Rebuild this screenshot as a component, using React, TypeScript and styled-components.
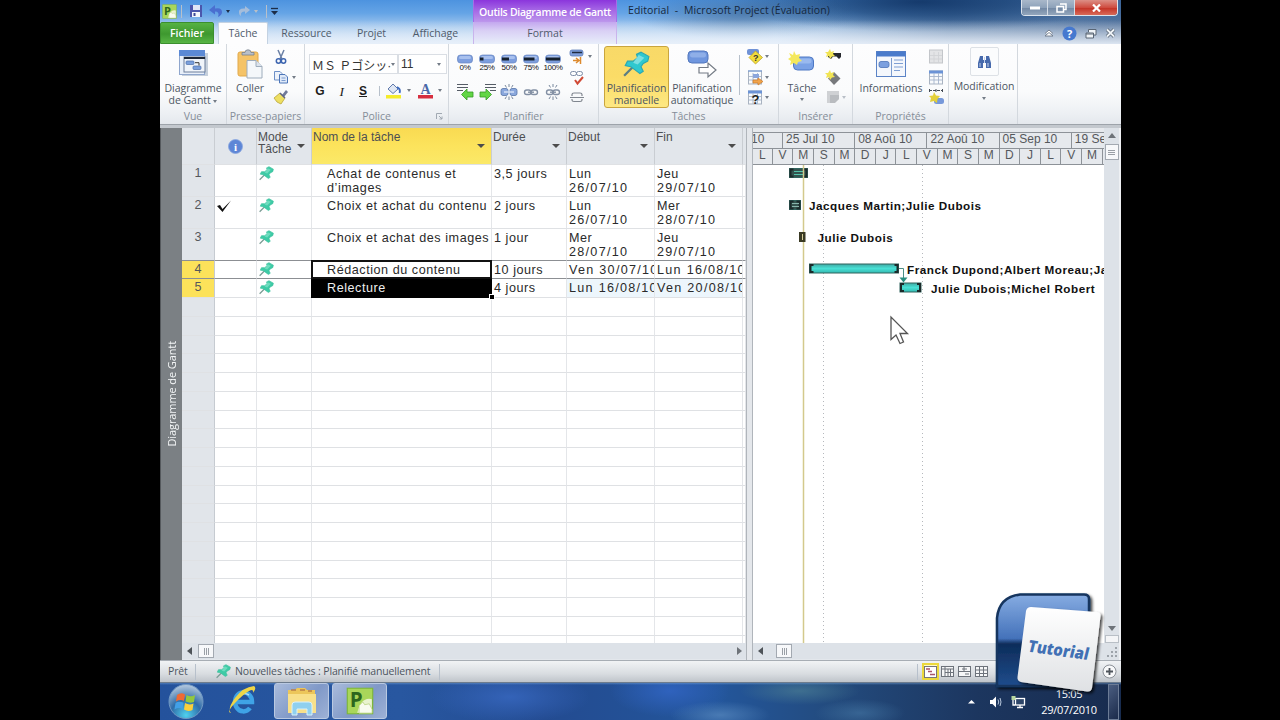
import React from 'react';
import styled, { createGlobalStyle } from 'styled-components';

const UI_FONT = '"Open Sans", "Noto Sans", sans-serif';
const SHEET_FONT = '"Liberation Sans", "Noto Sans CJK JP", sans-serif';
const COLUMNS = '33px 42px 55px 180px 75px 88px 88px 3px';

const GlobalStyle = createGlobalStyle`
  * { box-sizing: border-box; }
  body { margin: 0; background: #000; overflow: hidden; }
  svg { display: block; flex: none; }
`;

const Screen = styled.div`
  width: 1280px;
  height: 720px;
  padding: 0 159px 0 160px;
  background: #000;
  font-family: ${UI_FONT};
  font-size: 10.5px;
  color: #4c5663;
  overflow: hidden;
`;
const Desktop = styled.div`
  display: flex;
  flex-direction: column;
  width: 961px;
  height: 720px;
  background: #d9dde2;
`;

/* title bar and tabs */
const Chrome = styled.div`
  height: 44px;
  background:
    linear-gradient(180deg, transparent 20px, rgba(232, 240, 250, 0.9) 44px),
    radial-gradient(ellipse 110px 26px at 585px 14px, rgba(52, 84, 122, 0.5), transparent),
    radial-gradient(ellipse 190px 30px at 760px 2px, rgba(14, 48, 96, 0.85), rgba(20, 56, 104, 0.6) 45%, transparent),
    linear-gradient(90deg, transparent 64%, rgba(40, 72, 116, 0.5) 82%, rgba(50, 76, 116, 0.65)),
    linear-gradient(180deg, #4d93df 0, #65a4e6 30%, #a5c9ee 62%, #dbe8f6 100%);
`;
const ChromeRow = styled.div`
  display: flex;
  align-items: center;
  height: 22px;
`;
const QuickAccess = styled.div`
  display: flex;
  align-items: center;
  width: 313px;
  height: 20px;
  padding-left: 2px;
`;
const Spacer = styled.span<{ $w: number }>`
  width: ${p => p.$w}px;
`;
const ContextTitle = styled.div`
  width: 144px;
  height: 22px;
  border: solid #a56de8;
  border-width: 0 1px;
  background: linear-gradient(180deg, #8b35dc 0, #a261e4 40%, #bd97ec);
  color: #fff;
  font-weight: 600;
  letter-spacing: -0.27px;
  line-height: 25px;
  text-align: center;
  white-space: nowrap;
`;
const WindowTitle = styled.div`
  width: 404px;
  padding-left: 11px;
  color: #16273c;
  letter-spacing: 0.09px;
  line-height: 20px;
  align-self: flex-start;
  white-space: pre;
`;
const WindowButtons = styled.div`
  display: flex;
  align-self: flex-start;
  height: 16px;
  border: 1px solid #dbe3ec;
  border-top: 0;
  border-radius: 0 0 4px 4px;
  overflow: hidden;
`;
const WindowButton = styled.div<{ $w: number; $close?: boolean }>`
  display: flex;
  align-items: center;
  justify-content: center;
  width: ${p => p.$w}px;
  border-left: ${p => (p.$w === 25 ? 0 : 1)}px solid #d4dce6;
  background: ${p =>
    p.$close
      ? 'linear-gradient(180deg, #dc8f86, #cf4c40 50%, #c43428 55%, #d86a58)'
      : 'linear-gradient(180deg, #a9b8ca, #8ea2ba 50%, #7389a5 55%, #93a6bc)'};
`;
const Tab = styled.div<{ $w: number; $kind?: 'file' | 'active' | 'context' }>`
  width: ${p => p.$w}px;
  height: 22px;
  line-height: 22px;
  text-align: center;
  color: #4f5b6b;
  ${p =>
    p.$kind === 'file' &&
    `margin-right: 4px; border-radius: 2px 2px 0 0; color: #fff; border: 1px solid #3b8f2e; font-weight: 600;
     line-height: 20px; background: linear-gradient(180deg, #56b243, #3e982f 55%, #58b545);`}
  ${p => p.$kind === 'active' && 'background: #fdfdfe; border: 1px solid #c4d2e2; border-bottom: 0; line-height: 20px; border-radius: 2px 2px 0 0;'}
  ${p =>
    p.$kind === 'context' &&
    'border: solid #c9b4ec; border-width: 0 1px; background: linear-gradient(180deg, #c3a7ef, #d9d0f5 40%, #e8eefa);'}
`;
const TabTools = styled.div`
  display: flex;
  align-items: center;
  gap: 8px;
  margin-left: auto;
  padding-right: 5px;
`;

/* ribbon */
const Ribbon = styled.div`
  display: flex;
  height: 81px;
  border-bottom: 1px solid #9da3aa;
  background: linear-gradient(180deg, #fdfdfe 0, #fafbfc 60%, #eceff3 88%, #e4e8ed);
`;
const Group = styled.div<{ $w: number }>`
  display: flex;
  flex-direction: column;
  width: ${p => p.$w}px;
  padding-top: 2px;
  border-right: 1px solid #d3d8de;
`;
const GroupBody = styled.div`
  display: flex;
  height: 63px;
`;
const Caption = styled.div`
  display: grid;
  grid-template-columns: 1fr auto 1fr;
  align-items: center;
  height: 14px;
  color: #858d98;
  font-size: 10.5px;
  letter-spacing: -0.05px;
  > span { grid-column: 2; }
`;
const BigButton = styled.div<{ $w: number; $left?: number; $on?: boolean }>`
  display: flex;
  flex-direction: column;
  align-items: center;
  width: ${p => p.$w}px;
  height: 62px;
  margin-left: ${p => p.$left || 0}px;
  padding-top: ${p => (p.$on ? 0 : 1)}px;
  border-radius: 3px;
  line-height: 12px;
  text-align: center;
  white-space: nowrap;
  letter-spacing: -0.03px;
  ${p => p.$on && 'border: 1px solid #c9a53e; background: linear-gradient(180deg, #f8d968, #fbdc67 50%, #fde883);'}
`;
const IconBox = styled.div<{ $framed?: boolean }>`
  display: flex;
  align-items: center;
  justify-content: center;
  width: 34px;
  height: 34px;
  margin-bottom: 1px;
  ${p => p.$framed && 'width: 29px; height: 29px; margin: 0 0 4px; border: 1px solid #dde1e6; border-radius: 2px; background: #fbfcfd;'}
`;
const Caret = styled.span<{ $light?: boolean; $top?: number }>`
  display: inline-block;
  flex: none;
  border: 2.5px solid transparent;
  border-top: 3px solid ${p => (p.$light ? '#b9bfc7' : '#747c87')};
  border-bottom: 0;
  margin: ${p => p.$top || 0}px 0 0 0;
  vertical-align: middle;
`;
const DarkCaret = styled(Caret)`
  border-top-color: #1c2d47;
`;
const IconColumn = styled.div<{ $left?: number; $w?: number }>`
  display: grid;
  grid-template-rows: 21px 20px 20px;
  width: ${p => p.$w || 30}px;
  margin-left: ${p => p.$left || 0}px;
`;
const IconCell = styled.div<{ $gap?: number }>`
  display: flex;
  align-items: center;
  gap: ${p => p.$gap || 1}px;
`;
const FontPane = styled.div`
  display: flex;
  flex-direction: column;
  padding: 8px 0 0 4px;
`;
const FontRow = styled.div`
  display: flex;
  height: 20px;
  margin-bottom: 8px;
`;
const Combo = styled.div<{ $w: number }>`
  display: flex;
  align-items: center;
  justify-content: space-between;
  width: ${p => p.$w}px;
  padding: 0 5px 0 2px;
  border: 1px solid #dadee4;
  background: #fff;
  color: #333;
  font-family: ${SHEET_FONT};
  font-size: 12px;
  white-space: pre;
`;
const StyleRow = styled.div`
  display: grid;
  grid-template-columns: 22px 21px 22px 11px 17px 14px 18px 11px;
  align-items: center;
  justify-items: center;
  color: #1d1d1d;
  font-family: "Liberation Sans", sans-serif;
  font-size: 12px;
`;
const Launcher = styled.svg`
  grid-column: 3;
  justify-self: end;
  margin-right: 5px;
`;
const PlanGrid = styled.div`
  display: grid;
  grid-template-columns: repeat(5, 22px);
  grid-template-rows: 32px 28px;
  align-items: center;
  justify-items: center;
  margin-left: 5px;
`;
const Rule = styled.div<{ $h?: number; $m?: string }>`
  width: 1px;
  height: ${p => p.$h || 13}px;
  margin: ${p => p.$m || '0'};
  background: #b7c0cb;
`;

/* workspace */
const Gap = styled.div`
  height: 3px;
  background: #c3c8ce;
`;
const Workspace = styled.div`
  display: flex;
  height: 532px;
  background: #e3e7ec;
`;
const ViewBar = styled.div`
  display: flex;
  align-items: center;
  justify-content: center;
  width: 22px;
  background: #7b8084;
  border-left: 1px solid #55595d;
  color: #f3f5f6;
  writing-mode: vertical-rl;
`;
const ViewName = styled.span`
  transform: rotate(180deg);
  font-size: 11px;
  line-height: 24px;
  letter-spacing: -0.1px;
`;
const Pane = styled.div<{ $w: number }>`
  display: flex;
  flex-direction: column;
  width: ${p => p.$w}px;
  overflow: hidden;
`;
const Sheet = styled.div`
  height: 515px;
  overflow: hidden;
  background: #fff;
  font-family: ${SHEET_FONT};
  font-size: 12.6px;
  color: #2a2a2a;
`;
const SheetRow = styled.div<{ $h: number; $dark?: boolean }>`
  display: grid;
  grid-template-columns: ${COLUMNS};
  height: ${p => p.$h}px;
  > * { border-bottom: 1px solid ${p => (p.$dark ? '#8c8f93' : '#dfe1e4')}; }
`;
const HeaderCell = styled.div<{ $selected?: boolean }>`
  display: flex;
  justify-content: space-between;
  align-items: center;
  padding: 0 6px 0 1px;
  border-right: 1px solid #c9cdd2;
  background: ${p => (p.$selected ? 'linear-gradient(180deg, #f9da52, #fce35c 50%, #fbe968)' : '#e2e6eb')};
  color: #4d4f52;
  font-size: 12px;
  line-height: 12px;
  overflow: hidden;
`;
const HeaderText = styled.span`
  align-self: flex-start;
  padding-top: 3px;
`;
const HeaderCaret = styled.span`
  border: 4px solid transparent;
  border-top: 4px solid #4c4c4c;
  border-bottom: 0;
`;
const RowNumber = styled.div<{ $selected?: boolean }>`
  padding-top: 1px;
  border-right: 1px solid #c6cbd1;
  background: ${p => (p.$selected ? '#fce25a' : '#e1e5ea')};
  color: #55585c;
  text-align: center;
  line-height: 14px;
`;
const Cell = styled.div<{ $date?: boolean; $tint?: boolean; $wrapped?: boolean }>`
  padding: 2px 0 0 2px;
  border-right: 1px solid #e4e6e9;
  background: ${p => (p.$tint ? '#edf6fc' : 'transparent')};
  line-height: 14px;
  letter-spacing: ${p => (p.$date ? 1.28 : 0.55)}px;
  white-space: pre;
  overflow: hidden;
  ${p => p.$wrapped && '&::first-line { letter-spacing: 0.45px; }'}
`;
const NameCell = styled(Cell)<{ $mark?: 'active' | 'filled' }>`
  padding-left: 15px;
  ${p => p.$mark === 'active' && '&& { border: 2px solid #111; padding: 1px 0 0 14px; background: #fff; margin: -1px 0 0 -1px; }'}
  ${p => p.$mark === 'filled' && '&& { background: #000; border-color: #000; color: #eee; margin-left: -1px; padding-left: 16px; }'}
`;
const FillHandle = styled.i`
  position: absolute;
  left: 489px;
  top: 294px;
  width: 6px;
  height: 6px;
  border: 1px solid #fff;
  background: #000;
`;
const ScrollTrack = styled.div`
  display: flex;
  align-items: center;
  height: 16px;
  padding: 0 4px 0 5px;
  background: #dde2e8;
`;
const Thumb = styled.div<{ $vertical?: boolean; $gap: number }>`
  display: flex;
  flex-direction: ${p => (p.$vertical ? 'column' : 'row')};
  align-items: center;
  justify-content: center;
  gap: 1px;
  width: ${p => (p.$vertical ? 14 : 16)}px;
  height: ${p => (p.$vertical ? 16 : 14)}px;
  margin: ${p => (p.$vertical ? `${p.$gap}px 0 0` : `0 0 0 ${p.$gap}px`)};
  border: 1px solid #a3a9b1;
  background: #f7f8fa;
  > i {
    width: ${p => (p.$vertical ? '7px' : '1px')};
    height: ${p => (p.$vertical ? '1px' : '7px')};
    background: #9a9fa6;
  }
`;
const Arrow = styled.i<{ $dir: 'left' | 'right' | 'up' | 'down' }>`
  border: 4px solid transparent;
  ${p => ({
    left: 'border-right: 5px solid #4e5358; border-left: 0;',
    right: 'border-left: 5px solid #6e7379; border-right: 0; margin-left: auto;',
    up: 'border-bottom: 5px solid #6e7379; border-top: 0;',
    down: 'border-top: 5px solid #6e7379; border-bottom: 0; margin-top: auto;',
  })[p.$dir]}
`;
const Splitter = styled.div`
  width: 7px;
  border: solid #b0b5bb;
  border-width: 0 1px;
  background: #e4e7eb;
`;
const TimeScale = styled.div`
  height: 37px;
  padding-top: 4px;
  background: #e6e9ed;
  border-bottom: 1px solid #8d9298;
  font-family: ${SHEET_FONT};
  color: #55585c;
`;
const Tier = styled.div<{ $minor?: boolean }>`
  display: flex;
  height: ${p => (p.$minor ? 15 : 17)}px;
  border: solid #8d9298;
  border-width: ${p => (p.$minor ? 0 : '1px 0')};
  font-size: 12px;
  line-height: 13px;
  overflow: hidden;
`;
const Tick = styled.div<{ $w: number; $center?: boolean; $first?: boolean }>`
  flex: none;
  width: ${p => p.$w}px;
  padding-left: ${p => (p.$center || p.$first ? 0 : 3)}px;
  text-indent: ${p => (p.$first ? -2 : 0)}px;
  border-right: 1px solid #8d9298;
  text-align: ${p => (p.$center ? 'center' : 'left')};
  white-space: nowrap;
`;
const VerticalBar = styled.div`
  display: flex;
  flex-direction: column;
  align-items: center;
  width: 17px;
  height: 532px;
  padding: 5px 2px 0 0;
  background: linear-gradient(90deg, #dde2e8 15px, #eef0f3 15px);
`;
const Grip = styled.div`
  width: 14px;
  margin-top: 4px;
  height: 8px;
  border: 1px solid #b9bfc6;
  background: #f4f5f7;
`;

/* bottom bars */
const StatusBar = styled.div`
  display: flex;
  align-items: center;
  height: 23px;
  padding: 0 0 0 8px;
  border-top: 1px solid #a7adb4;
  border-bottom: 1px solid #6c7b8d;
  background: linear-gradient(180deg, #f1f3f5, #d9dde1 60%, #bfc4ca);
  color: #4d5560;
`;
const StatusText = styled.span<{ $w: number; $left?: number }>`
  width: ${p => p.$w}px;
  padding: 0 0 1px ${p => p.$left || 0}px;
  letter-spacing: -0.14px;
  white-space: nowrap;
`;
const ViewButton = styled.div<{ $on?: boolean }>`
  display: flex;
  align-items: center;
  justify-content: center;
  width: 17px;
  height: 17px;
  border: ${p => (p.$on ? '2px solid #ecd93c' : 0)};
  background: ${p => (p.$on ? '#fff9c8' : 'transparent')};
`;
const TaskBar = styled.div`
  display: flex;
  height: 37px;
  padding-left: 8px;
  background:
    linear-gradient(180deg, rgba(120, 165, 215, 0.5), transparent 2px),
    radial-gradient(ellipse 50px 14px at 560px 32px, rgba(98, 146, 196, 0.6), transparent),
    radial-gradient(ellipse 60px 14px at 640px 8px, rgba(80, 132, 150, 0.6), transparent),
    radial-gradient(ellipse 45px 14px at 700px 30px, rgba(70, 120, 165, 0.6), transparent),
    radial-gradient(ellipse 80px 26px at 350px 14px, #3463b8, transparent),
    radial-gradient(ellipse 60px 26px at 510px 8px, #2f62bd, transparent),
    linear-gradient(90deg, #24529c, #2857a0 25%, #234b91 40%, #23569b 58%, #234b7e 70%, #1c365f 85%, #182c4f);
`;
const TaskButton = styled.div`
  display: flex;
  align-items: center;
  justify-content: center;
  width: 55px;
  height: 36px;
  margin-right: 3px;
  border: 1px solid #b9c9e2;
  border-radius: 3px;
  background: linear-gradient(135deg, #a9bbdb, #8099c8 55%, #9db1d6);
`;
const Tray = styled.div`
  display: flex;
  align-items: center;
  gap: 9px;
  margin-left: auto;
  color: #fff;
`;
const Clock = styled.div`
  width: 64px;
  margin-left: 2px;
  font-size: 11px;
  line-height: 16px;
  letter-spacing: -0.28px;
  text-align: center;
`;
const ShowDesktop = styled.div`
  width: 11px;
  height: 36px;
  margin: 0 2px 0 -2px;
  border: 1px solid #6c7c96;
  background: linear-gradient(135deg, #4a5d80, #1b2b4b);
`;
const Watermark = styled.svg`
  position: absolute;
  left: 990px;
  top: 588px;
`;
const Pointer = styled.svg`
  position: absolute;
  left: 889px;
  top: 315px;
`;

/* icons */
const Pin = ({ size = 16, big }: { size?: number; big?: boolean }) => (
  <svg width={size} height={size} viewBox="0 0 24 24">
    <path d="M1 22 9 14" stroke={big ? '#5a7d84' : '#7a9c94'} strokeWidth="2" />
    <path
      d="M12 3 16 1 23 5 22 9 18 11 16 14 18 18 15 20 11 17 7 14 2 13 4 9 9 9 13 6Z"
      fill={big ? '#2fc8cf' : '#3ecba6'}
      stroke={big ? '#2aa7b3' : '#3abf9b'}
      strokeWidth="1"
    />
    <path d="M14 3.500 19 6 13 12 9 10.500Z" fill={big ? '#7adfe2' : '#6fdcbe'} />
  </svg>
);
const Progress = ({ value }: { value: number }) => (
  <svg width="22" height="20" viewBox="0 0 22 20">
    <rect x="3.500" y="3" width="15" height="8" rx="3" fill="#7d9ede" stroke="#6785c2" strokeWidth="0.7" />
    <rect x="5" y="4" width="12" height="3" rx="1.500" fill="#a8c0ee" />
    <rect x="4" y="5.500" width={(14 * value) / 100} height="3" fill="#16202e" />
    <text x="11" y="18" textAnchor="middle" fontFamily="Liberation Sans" fontSize="8" letterSpacing="-0.4" fill="#111">
      {value}%
    </text>
  </svg>
);
const Indent = ({ flip }: { flip?: boolean }) => (
  <svg width="17" height="18" viewBox="0 0 17 18">
    <g transform={flip ? 'translate(17 0) scale(-1 1)' : undefined}>
      <path d="M0 1.500H11M0 4.500H11M0 7.500H6" stroke="#555c66" />
      <path d="M4.500 11.500 10 6V9H16V14H10V17Z" fill="#62d645" stroke="#369a27" strokeWidth="0.8" />
    </g>
  </svg>
);
const LinkIcon = ({ kind }: { kind: 'split' | 'link' | 'unlink' }) => (
  <svg width="18" height="18" viewBox="0 0 18 18">
    {kind !== 'link' && <path d="M9 1V4M5 2 6.500 4.500M13 2 11.500 4.500M9 13.500V17M5 16 6.500 13.500M13 16 11.500 13.500" stroke="#6a7b92" strokeWidth="0.9" />}
    {kind === 'split' ? (
      <g fill="#8ba8dd" stroke="#5673a8" strokeWidth="0.8">
        <rect x="1" y="5.500" width="7" height="7" rx="2" />
        <rect x="10" y="5.500" width="7" height="7" rx="2" />
        <path d="M4 9H14" stroke="#d3e0f6" strokeWidth="1.500" />
      </g>
    ) : (
      <g fill="none" stroke="#8390a4" strokeWidth="1.400">
        <rect x="2.500" y="7" width="6.500" height="4.500" rx="2.200" />
        <rect x="9" y="7" width="6.500" height="4.500" rx="2.200" />
        <path d="M6 9.200H12" />
      </g>
    )}
  </svg>
);
const Windows = () => (
  <svg width="31" height="30" viewBox="0 0 31 30">
    <rect x="4" y="4" width="26" height="23" fill="#8fa1ba" opacity="0.5" />
    <rect x="1.500" y="1.500" width="25" height="24" fill="#e8eff9" stroke="#8fa6cd" />
    <rect x="1" y="1" width="26" height="6" fill="#5b89d5" />
    <rect x="6" y="8" width="21" height="15" fill="#f0f4fa" stroke="#6d7f9b" />
    <path d="M6 9H27" stroke="#1e2838" strokeWidth="2" />
    <rect x="8" y="12" width="8" height="3.500" rx="1" fill="#7a9fdc" stroke="#4a6da9" strokeWidth="0.7" />
    <rect x="15" y="17" width="8" height="3.500" rx="1" fill="#7a9fdc" stroke="#4a6da9" strokeWidth="0.7" />
    <path d="M17 13.700H21V16.500" fill="none" stroke="#333" />
  </svg>
);
const Clipboard = () => (
  <svg width="28" height="30" viewBox="0 0 28 30">
    <rect x="2" y="3" width="20" height="24" rx="2" fill="#f5c367" stroke="#e2a94a" />
    <path d="M6 6V3.500H9Q9 .8 12 .8T15 3.500H18V6Z" fill="#b9c0ca" stroke="#78818d" strokeWidth="0.8" />
    <path d="M11 11.500H20L26 17.500V29H11Z" fill="#f4f7fa" stroke="#9eacbc" />
    <path d="M20 11.500V17.500H26" fill="#dbe3ec" stroke="#9eacbc" />
  </svg>
);
const SmallTable = ({ variant }: { variant: 'plain' | 'table' | 'move' | 'question' }) => (
  <svg width="17" height="17" viewBox="0 0 17 17">
    <rect x="1.500" y="2" width="13" height="13" fill={variant === 'plain' ? '#e3e4e6' : '#f8fafc'} stroke={variant === 'plain' ? '#c3c6ca' : '#a9b3c1'} />
    {variant !== 'plain' && <rect x="1" y="1.500" width="14" height={variant === 'move' ? 1 : 3} fill="#6b93d6" />}
    <path d="M2 7.500H14M2 11H14M6 4V15M10.500 4V15" stroke={variant === 'plain' ? '#d1d3d6' : '#a5b4cc'} strokeWidth="0.9" />
    {variant === 'move' && (
      <React.Fragment>
        <rect x="6" y="5" width="6" height="4" fill="#8aa5dc" />
        <path d="M6 11H11V9L16 12.500 11 16V14H6Z" fill="#f0a44c" stroke="#cf7d2a" strokeWidth="0.7" />
      </React.Fragment>
    )}
    {variant === 'question' && (
      <text x="8.500" y="15" textAnchor="middle" fontFamily="Liberation Sans" fontWeight="700" fontSize="13" fill="#222">?</text>
    )}
  </svg>
);
const NewTask = () => (
  <svg width="30" height="26" viewBox="0 0 30 26">
    <rect x="6.500" y="6" width="20" height="13" rx="4" fill="#7ba2e6" stroke="#4e78c4" />
    <rect x="8.500" y="7.500" width="16" height="5" rx="2.500" fill="#a7c3f2" opacity="0.7" />
    <path d="M7 0 9 4 13 3 12 7 15 10 11 11 10 14 7 12 3 14 4 10 1 8 4 6 2 2 6 4Z" fill="#f4e85c" />
  </svg>
);
const Spark = () => <path d="M5 1 6 4 9 3 8 6 10 8 7 8.500 5 11 4 8 1 9 2 6 0 4 3 4Z" fill="#f1e454" />;
const ProjectLogo = ({ size }: { size: number }) => (
  <svg width={size} height={size} viewBox="0 0 30 30">
    <rect x="1.500" y="1.500" width="27" height="27" fill="#e9f3cf" stroke="#7db53c" strokeWidth="1.500" />
    <path d="M2 2H28V13Q16 10 12 28H2Z" fill="#a9d65a" />
    <text x="4" y="21" fontFamily="Open Sans" fontWeight="700" fontSize="22" fill="#2c661d">P</text>
    <path d="M14 20 18 16 20 19 25 18 28 24V28H14Z" fill="#f8fbef" stroke="#b5d07b" strokeWidth="0.8" />
  </svg>
);
const InfoIcon = () => (
  <svg width="15" height="15" viewBox="0 0 15 15">
    <circle cx="7.500" cy="7.500" r="7" fill="#5e86d6" stroke="#88a6e0" strokeWidth="0.8" />
    <text x="7.500" y="11.500" textAnchor="middle" fontFamily="Liberation Serif" fontWeight="700" fontSize="11" fill="#fff">i</text>
  </svg>
);

interface Task {
  id: number;
  h: number;
  name: string;
  duration: string;
  start: string;
  end: string;
  done?: boolean;
  mark?: 'active' | 'filled';
}

const tasks: Task[] = [
  { id: 1, h: 32, name: 'Achat de contenus et\nd’images', duration: '3,5 jours', start: 'Lun\n26/07/10', end: 'Jeu\n29/07/10' },
  { id: 2, h: 32, name: 'Choix et achat du contenu', duration: '2 jours', start: 'Lun\n26/07/10', end: 'Mer\n28/07/10', done: true },
  { id: 3, h: 32, name: 'Choix et achat des images', duration: '1 jour', start: 'Mer\n28/07/10', end: 'Jeu\n29/07/10' },
  { id: 4, h: 18, name: 'Rédaction du contenu', duration: '10 jours', start: 'Ven 30/07/10', end: 'Lun 16/08/10', mark: 'active' },
  { id: 5, h: 19, name: 'Relecture', duration: '4 jours', start: 'Lun 16/08/10', end: 'Ven 20/08/10', mark: 'filled' },
];
const emptyRows = Array.from({ length: 19 }, (_, i) => i);
const weeks = ['25 Jul 10', '08 Aoû 10', '22 Aoû 10', '05 Sep 10', '19 Sep 10'];
const days = 'VMSMDJLVMSMDJLVM'.split('');

const TitleArea = () => (
  <Chrome>
    <ChromeRow>
      <QuickAccess>
        <ProjectLogo size={15} />
        <Rule $m="0 7px 0 4px" />
        <svg width="14" height="14" viewBox="0 0 14 14">
          <path d="M1 1H13V13H1Z" fill="#4b56ac" />
          <rect x="4" y="1" width="7" height="5" fill="#dfe6f6" />
          <rect x="3" y="8" width="8" height="5" fill="#f3f5fa" />
          <rect x="4.500" y="9" width="2" height="3" fill="#3c4796" />
        </svg>
        <Spacer $w={6} />
        <svg width="15" height="14" viewBox="0 0 15 14">
          <path d="M0 6 6 1V4.500Q13 3 13 8 13 11 9 13 11 7.500 6 7.500V10.500Z" fill="#4a6fd0" />
        </svg>
        <Spacer $w={2} />
        <DarkCaret />
        <Spacer $w={7} />
        <svg width="14" height="14" viewBox="0 0 14 14">
          <path d="M13 6 8 2V4.500Q1 4 2 9 2 11 4 12 3 7.500 8 7.500V10Z" fill="#a5bddb" />
        </svg>
        <Spacer $w={3} />
        <Caret $light />
        <Rule $m="0 3px 0 8px" />
        <svg width="9" height="9" viewBox="0 0 9 9">
          <path d="M1 1.500H8" stroke="#1c2d47" strokeWidth="1.300" />
          <path d="M1 4H8L4.500 8Z" fill="#1c2d47" />
        </svg>
      </QuickAccess>
      <ContextTitle>Outils Diagramme de Gantt</ContextTitle>
      <WindowTitle>{'Editorial  -  Microsoft Project (Évaluation)'}</WindowTitle>
      <WindowButtons>
        <WindowButton $w={25}>
          <svg width="10" height="4"><rect y="0.500" width="10" height="3" fill="#fff" /></svg>
        </WindowButton>
        <WindowButton $w={27}>
          <svg width="11" height="10" viewBox="0 0 11 10">
            <path d="M4 1H10V6.500H8M1 3.500H7.500V9H1Z" fill="none" stroke="#fff" strokeWidth="1.500" />
          </svg>
        </WindowButton>
        <WindowButton $w={43} $close>
          <svg width="9" height="8" viewBox="0 0 9 8">
            <path d="M1 .5 8 7.500M8 .5 1 7.500" stroke="#fff" strokeWidth="2.200" />
          </svg>
        </WindowButton>
      </WindowButtons>
    </ChromeRow>
    <ChromeRow>
      <Tab $w={54} $kind="file">Fichier</Tab>
      <Tab $w={50} $kind="active">Tâche</Tab>
      <Tab $w={77}>Ressource</Tab>
      <Tab $w={53}>Projet</Tab>
      <Tab $w={75}>Affichage</Tab>
      <Tab $w={144} $kind="context">Format</Tab>
      <TabTools>
        <svg width="10" height="8" viewBox="0 0 10 8">
          <path d="M1 7 5 3.500 9 7ZM1 4.500 5 1 9 4.500" fill="#fff" stroke="#6b7787" strokeWidth="0.9" />
        </svg>
        <svg width="15" height="15" viewBox="0 0 15 15">
          <circle cx="7.500" cy="7.500" r="7" fill="#4679cf" />
          <text x="7.500" y="11.500" textAnchor="middle" fontFamily="Open Sans" fontWeight="700" fontSize="11" fill="#fff">?</text>
        </svg>
        <svg width="12" height="11" viewBox="0 0 12 11">
          <path d="M3.500 4V1.500H11V7H9M1 5H8.500V10H1Z" fill="#f0f4f8" stroke="#5a6675" />
          <path d="M1 6H8.500" stroke="#5a6675" />
        </svg>
        <svg width="11" height="10" viewBox="0 0 11 10">
          <path d="M2 1.500 9 8.500M9 1.500 2 8.500" stroke="#5a6675" strokeWidth="3.400" />
          <path d="M2 1.500 9 8.500M9 1.500 2 8.500" stroke="#f0f4f8" strokeWidth="1.800" />
        </svg>
      </TabTools>
    </ChromeRow>
  </Chrome>
);

const RibbonBar = () => (
  <Ribbon>
    <Group $w={67}>
      <GroupBody>
        <BigButton $w={66}>
          <IconBox><Windows /></IconBox>
          <span>Diagramme</span>
          <span>de Gantt <Caret /></span>
        </BigButton>
      </GroupBody>
      <Caption><span>Vue</span></Caption>
    </Group>
    <Group $w={78}>
      <GroupBody>
        <BigButton $w={46}>
          <IconBox><Clipboard /></IconBox>
          <span>Coller</span>
          <Caret $top={4} />
        </BigButton>
        <IconColumn>
          <IconCell>
            <svg width="16" height="16" viewBox="0 0 16 16">
              <path d="M5 1 9 10M11 1 7 10" stroke="#6a7fa5" strokeWidth="1.500" />
              <circle cx="5.500" cy="12" r="2.200" fill="none" stroke="#3d65b0" strokeWidth="1.500" />
              <circle cx="10.500" cy="12" r="2.200" fill="none" stroke="#3d65b0" strokeWidth="1.500" />
            </svg>
          </IconCell>
          <IconCell $gap={3}>
            <svg width="16" height="16" viewBox="0 0 16 16">
              <path d="M1.500 2.500H7L9 4.500V11H1.500Z" fill="#edf2fa" stroke="#6c8fc7" />
              <path d="M6.500 5.500H12L14.500 8V14H6.500Z" fill="#dfe9f8" stroke="#4d76b8" />
              <path d="M8.500 9H12.500M8.500 11.500H12.500" stroke="#7d9ccf" />
            </svg>
            <Caret />
          </IconCell>
          <IconCell>
            <svg width="16" height="16" viewBox="0 0 16 16">
              <path d="M9 6 13 1 15 3 11 8Z" fill="#707a9a" />
              <path d="M1 9 7 4 12 9 8 15 4 13Z" fill="#eedf62" stroke="#b9a63a" strokeWidth="0.8" />
              <path d="M7 4 12 9" stroke="#5f6684" strokeWidth="1.500" />
            </svg>
          </IconCell>
        </IconColumn>
      </GroupBody>
      <Caption><span>Presse-papiers</span></Caption>
    </Group>
    <Group $w={144}>
      <GroupBody>
        <FontPane>
          <FontRow>
            <Combo $w={89}>ＭＳ Ｐゴシッ·<Caret /></Combo>
            <Combo $w={49}>11<Caret /></Combo>
          </FontRow>
          <StyleRow>
            <b>G</b>
            <svg width="10" height="14" viewBox="0 0 10 14">
              <text x="2.500" y="11.500" fontFamily="Liberation Serif" fontStyle="italic" fontSize="13.500" fill="#222">I</text>
            </svg>
            <b><u>S</u></b>
            <Rule $h={10} />
            <svg width="17" height="17" viewBox="0 0 17 17">
              <path d="M3 7 8 2 13 7 8 11.500Z" fill="#dfe7f4" stroke="#5f79ab" />
              <path d="M12 5Q16 7 14.500 11" fill="none" stroke="#3e6bbf" strokeWidth="1.800" />
              <rect x="1" y="13" width="15" height="3.500" fill="#f5ec2b" />
            </svg>
            <Caret />
            <svg width="17" height="17" viewBox="0 0 17 17">
              <text x="8.500" y="12" textAnchor="middle" fontFamily="Liberation Serif" fontWeight="700" fontSize="14" fill="#4a68a8">A</text>
              <rect x="1" y="13" width="15" height="3.500" fill="#d62e3f" />
            </svg>
            <Caret />
          </StyleRow>
        </FontPane>
      </GroupBody>
      <Caption>
        <span>Police</span>
        <Launcher width="7" height="7" viewBox="0 0 7 7">
          <path d="M.5 6V.5H6M3 3 6 6M6 3.500V6H3.500" fill="none" stroke="#98a0aa" strokeWidth="0.9" />
        </Launcher>
      </Caption>
    </Group>
    <Group $w={150}>
      <GroupBody>
        <PlanGrid>
          {[0, 25, 50, 75, 100].map(value => <Progress key={value} value={value} />)}
          <Indent />
          <Indent flip />
          <LinkIcon kind="split" />
          <LinkIcon kind="link" />
          <LinkIcon kind="unlink" />
        </PlanGrid>
        <IconColumn $left={5}>
          <IconCell $gap={3}>
            <svg width="16" height="17" viewBox="0 0 16 17">
              <rect x="1" y="2" width="13" height="6" rx="2" fill="#7f9fdd" stroke="#5c7bb8" strokeWidth="0.8" />
              <path d="M3 4.500H13" stroke="#1f2b40" strokeWidth="1.500" />
              <path d="M4 12.500H9M7 10 10 12.500 7 15M11.500 9V16" fill="none" stroke="#dd8a2e" strokeWidth="1.500" />
            </svg>
            <Caret />
          </IconCell>
          <IconCell>
            <svg width="16" height="17" viewBox="0 0 16 17">
              <rect x="1.500" y="2.500" width="6" height="4" rx="2" fill="none" stroke="#7c8ca6" />
              <rect x="7.500" y="2.500" width="6" height="4" rx="2" fill="none" stroke="#7c8ca6" />
              <path d="M6 11 8.500 14.500 14 8" fill="none" stroke="#d04a35" strokeWidth="2" />
            </svg>
          </IconCell>
          <IconCell>
            <svg width="16" height="14" viewBox="0 0 16 14">
              <path d="M3 6V4.500Q3 3 5 3H11Q13 3 13 4.500V6M3 9V10Q3 11.500 5 11.500H11Q13 11.500 13 10V9M1 7.500H15" fill="none" stroke="#80868f" strokeWidth="1.200" />
            </svg>
          </IconCell>
        </IconColumn>
      </GroupBody>
      <Caption><span>Planifier</span></Caption>
    </Group>
    <Group $w={180}>
      <GroupBody>
        <BigButton $w={65} $left={5} $on>
          <IconBox><Pin big size={27} /></IconBox>
          <span>Planification</span>
          <span>manuelle</span>
        </BigButton>
        <BigButton $w={66}>
          <IconBox>
            <svg width="32" height="31" viewBox="0 0 32 31">
              <rect x="2" y="2" width="20" height="12" rx="4" fill="#6f96de" stroke="#5277bd" />
              <rect x="4" y="3.500" width="16" height="5" rx="2.500" fill="#9db9ed" opacity="0.700" />
              <path d="M13 18.500H22V14L30 21 22 28V24H13Z" fill="#fff" stroke="#747b85" strokeWidth="1.200" />
            </svg>
          </IconBox>
          <span>Planification</span>
          <span>automatique</span>
        </BigButton>
        <Rule $h={40} $m="9px 0 0 4px" />
        <IconColumn $left={7}>
          <IconCell>
            <svg width="17" height="17" viewBox="0 0 17 17">
              <rect x="0" y="1" width="12" height="6" rx="2" fill="#7092d6" />
              <path d="M8.500 3 15.500 9.500 8.500 16 2 9.500Z" fill="#f2dd3b" stroke="#baa228" strokeWidth="0.8" />
              <text x="8.700" y="13" textAnchor="middle" fontFamily="Liberation Sans" fontWeight="700" fontSize="9" fill="#333">?</text>
            </svg>
            <Caret />
          </IconCell>
          <IconCell><SmallTable variant="move" /><Caret /></IconCell>
          <IconCell><SmallTable variant="question" /><Caret /></IconCell>
        </IconColumn>
      </GroupBody>
      <Caption><span>Tâches</span></Caption>
    </Group>
    <Group $w={74}>
      <GroupBody>
        <BigButton $w={46}>
          <IconBox><NewTask /></IconBox>
          <span>Tâche</span>
          <Caret $top={4} />
        </BigButton>
        <IconColumn $w={27}>
          <IconCell>
            <svg width="17" height="17" viewBox="0 0 17 17">
              <path d="M3 5H16V9L14 11 11.500 8.500H8L6 11 3 9Z" fill="#26292e" />
              <Spark />
            </svg>
          </IconCell>
          <IconCell>
            <svg width="17" height="17" viewBox="0 0 17 17">
              <path d="M9 3 15.500 9.500 9 16 3 9.500Z" fill="#77797c" />
              <Spark />
            </svg>
          </IconCell>
          <IconCell>
            <svg width="16" height="16" viewBox="0 0 16 16">
              <path d="M2 2H14V10L9 14H2Z" fill="#cfd1d4" />
              <path d="M5 6H14V10L10 14H5Z" fill="#b9bcc0" />
            </svg>
            <Caret $light />
          </IconCell>
        </IconColumn>
      </GroupBody>
      <Caption><span>Insérer</span></Caption>
    </Group>
    <Group $w={96}>
      <GroupBody>
        <BigButton $w={72} $left={2}>
          <IconBox>
            <svg width="30" height="26" viewBox="0 0 30 26">
              <rect x="0.500" y="0.500" width="29" height="25" fill="#f4f7fc" stroke="#5b83c6" />
              <rect x="0.500" y="0.500" width="29" height="5" fill="#4a7bcb" />
              <rect x="3" y="10.500" width="10" height="6" rx="2" fill="#7ca0df" stroke="#4c74b8" strokeWidth="0.8" />
              <path d="M15.500 7V25" stroke="#7c9ccf" />
              <path d="M18 9H27M18 12.500H27M18 16H27M18 19.500H24" stroke="#7f9fd3" strokeWidth="1.200" />
            </svg>
          </IconBox>
          <span>Informations</span>
        </BigButton>
        <IconColumn $left={1} $w={18}>
          <IconCell><SmallTable variant="plain" /></IconCell>
          <IconCell><SmallTable variant="table" /></IconCell>
          <IconCell>
            <svg width="17" height="18" viewBox="0 0 17 18">
              <path d="M1 2.500H15M1.500 1V5M8 1V5M14.500 1V5" stroke="#444b55" strokeDasharray="3 1" />
              <rect x="6" y="10" width="10" height="6" rx="2.500" fill="#7799da" />
              <path d="M6 4 8 7.500 12 8 9.500 11 9 15 6 13 2 14 3 10 1 8 5 7.500Z" fill="#e3d03a" />
            </svg>
          </IconCell>
        </IconColumn>
      </GroupBody>
      <Caption><span>Propriétés</span></Caption>
    </Group>
    <Group $w={69}>
      <BigButton $w={70}>
        <IconBox $framed>
          <svg width="15" height="14" viewBox="0 0 15 14">
            <path d="M3 1H6V5H9V1H12L14 8V13H9V8H6V13H1V8Z" fill="#4669ac" />
            <path d="M3 8V12M11 8V12M7.500 2V8" stroke="#c3d2ec" />
          </svg>
        </IconBox>
        <span>Modification</span>
        <Caret $top={5} />
      </BigButton>
    </Group>
  </Ribbon>
);

const TaskSheet = () => (
  <Pane $w={564}>
    <Sheet>
      <SheetRow $h={37}>
        <HeaderCell />
        <HeaderCell style={{ justifyContent: 'center', padding: 0 }}><InfoIcon /></HeaderCell>
        <HeaderCell><HeaderText>Mode<br />Tâche</HeaderText><HeaderCaret /></HeaderCell>
        <HeaderCell $selected><HeaderText>Nom de la tâche</HeaderText><HeaderCaret /></HeaderCell>
        <HeaderCell><HeaderText>Durée</HeaderText><HeaderCaret /></HeaderCell>
        <HeaderCell><HeaderText>Début</HeaderText><HeaderCaret /></HeaderCell>
        <HeaderCell><HeaderText>Fin</HeaderText><HeaderCaret /></HeaderCell>
        <HeaderCell />
      </SheetRow>
      {tasks.map(({ id, h, name, duration, start, end, done, mark }) => (
        <SheetRow key={id} $h={h} $dark={id === 3 || id === 4}>
          <RowNumber $selected={!!mark}>{id}</RowNumber>
          <Cell>
            {done && (
              <svg width="16" height="14" viewBox="0 0 16 14">
                <path d="M0 7 3 6 5.500 10 14 1.500 5.500 13Z" fill="#111" />
              </svg>
            )}
          </Cell>
          <Cell style={{ paddingTop: 1 }}><Pin size={15} /></Cell>
          <NameCell $mark={mark}>{name}</NameCell>
          <Cell>{duration}</Cell>
          <Cell $date $wrapped={!mark} $tint={id === 5}>{start}</Cell>
          <Cell $date $wrapped={!mark} $tint={id === 5}>{end}</Cell>
          <Cell />
        </SheetRow>
      ))}
      {emptyRows.map(row => (
        <SheetRow key={row} $h={18.75}>
          <RowNumber />
          <Cell /><Cell /><Cell /><Cell /><Cell /><Cell /><Cell />
        </SheetRow>
      ))}
    </Sheet>
    <ScrollTrack>
      <Arrow $dir="left" />
      <Thumb $gap={6}><i /><i /><i /></Thumb>
      <Arrow $dir="right" />
    </ScrollTrack>
  </Pane>
);

const GanttBar = ({ x, y, w, dark }: { x: number; y: number; w: number; dark?: boolean }) => (
  <g>
    <rect x={x} y={y} width={w} height="9" fill={dark ? '#35544f' : 'url(#teal)'} stroke="#31655f" />
    <path d={`M${x + 4} ${y + 1}H${x + 1}V${y + 8}H${x + 4}M${x + w - 4} ${y + 1}H${x + w - 1}V${y + 8}H${x + w - 4}`} fill="none" stroke="#1c2a2a" strokeWidth="2" />
  </g>
);

const GanttChart = () => (
  <svg width="351" height="478" viewBox="753 165 351 478" fontFamily="Liberation Sans" fontWeight="700" fontSize="11.700" letterSpacing="0.520" fill="#111">
    <defs>
      <linearGradient id="teal" x1="0" y1="0" x2="0" y2="1">
        <stop offset="0" stopColor="#3fa9a3" />
        <stop offset="0.5" stopColor="#48e0d5" />
        <stop offset="1" stopColor="#35b9b1" />
      </linearGradient>
    </defs>
    <rect x="753" y="165" width="351" height="478" fill="#fff" />
    <path d="M823.500 165V643M922.500 165V643" stroke="#b5b8bc" strokeDasharray="1 3" />
    <GanttBar x={789.500} y={168.500} w={18} dark />
    <path d="M794 171.500H803M794 174.500H803" stroke="#55c4ac" />
    <GanttBar x={789.500} y={200.500} w={11} dark />
    <path d="M792 203.500H799M792 206.500H799" stroke="#88b5ab" />
    <path d="M803.500 165V643" stroke="#d3c98c" strokeWidth="1.500" />
    <rect x="799" y="232" width="6.500" height="10" fill="#3a3a24" />
    <path d="M802.500 234V240" stroke="#d7cf9b" />
    <GanttBar x={809.500} y={264} w={89} />
    <GanttBar x={900} y={283} w={21} />
    <path d="M899 268.500H903.500V279" fill="none" stroke="#4b8f85" />
    <path d="M899.500 277.500H907.500L903.500 282.500Z" fill="#2c8f81" />
    <text x="809" y="210">Jacques Martin;Julie Dubois</text>
    <text x="817.500" y="242">Julie Dubois</text>
    <text x="907" y="273.500">Franck Dupond;Albert Moreau;Jacques Martin</text>
    <text x="931" y="292.500">Julie Dubois;Michel Robert</text>
  </svg>
);

const GanttPane = () => (
  <Pane $w={351}>
    <TimeScale>
      <Tier>
        <Tick $w={30} $first>10</Tick>
        {weeks.map(week => <Tick key={week} $w={72.2}>{week}</Tick>)}
      </Tier>
      <Tier $minor>
        <Tick $w={19.700} $center>L</Tick>
        {days.map((day, i) => <Tick key={i} $w={20.63} $center>{day}</Tick>)}
      </Tier>
    </TimeScale>
    <GanttChart />
    <ScrollTrack>
      <Arrow $dir="left" />
      <Thumb $gap={13}><i /><i /><i /></Thumb>
    </ScrollTrack>
  </Pane>
);

const Status = () => (
  <StatusBar>
    <StatusText $w={27}>Prêt</StatusText>
    <Rule $h={16} $m="0 20px 0 0" />
    <Pin size={15} />
    <StatusText $w={208} $left={4}>Nouvelles tâches : Planifié manuellement</StatusText>
    <Rule $h={16} />
    <Rule $h={16} $m="0 4px 0 477px" />
    <ViewButton $on>
      <svg width="13" height="12" viewBox="0 0 13 12">
        <rect x="0.500" y="0.500" width="12" height="11" fill="#fff" stroke="#777" />
        <path d="M2 3H6M4 5.500H8M6 8.500H11" stroke="#a8546a" strokeWidth="1.500" />
      </svg>
    </ViewButton>
    {[0, 1, 2].map(i => (
      <ViewButton key={i}>
        <svg width="13" height="11" viewBox="0 0 13 11">
          <rect x="0.500" y="0.500" width="12" height="10" fill="#f6f7f8" stroke="#6d737b" />
          <path
            d={['M1 3H12M4 1V10M7 3V10M9.500 3V10M4 6.500H12', 'M1 5.500H12M4 3H9M7 8H11M6 1V5', 'M1 4H12M1 7.500H12M4.500 1V10M8.500 1V10'][i]}
            stroke="#6d737b"
          />
        </svg>
      </ViewButton>
    ))}
    <svg width="15" height="15" viewBox="0 0 15 15" style={{ margin: '0 4px 0 auto' }}>
      <circle cx="7.500" cy="7.500" r="6.500" fill="#f8f9fa" stroke="#8b9097" />
      <path d="M7.500 4V11M4 7.500H11" stroke="#4e545b" strokeWidth="1.800" />
    </svg>
  </StatusBar>
);

const Taskbar = () => (
  <TaskBar>
    <svg width="36" height="37" viewBox="0 0 36 37">
      <defs>
        <radialGradient id="orb" cx="0.5" cy="0.9" r="0.9">
          <stop offset="0" stopColor="#4fd1ee" />
          <stop offset="0.5" stopColor="#2f6ca8" />
          <stop offset="1" stopColor="#b8cbe0" />
        </radialGradient>
      </defs>
      <circle cx="18" cy="18.500" r="17" fill="url(#orb)" stroke="#6f98c4" />
      <path d="M9 12Q13 9 17 11.500L16 18Q12 16 8 18.500Z" fill="#ef6a35" />
      <path d="M18.500 12Q23 14.500 27 12L26 19Q22 20.500 17.500 18.500Z" fill="#93c83e" />
      <path d="M7.500 20Q11 17.500 15.500 19.800L14.500 26Q11 24 6.500 26.500Z" fill="#42a0e6" />
      <path d="M17 20Q21 22.500 25.500 20.500L24.500 27Q20 29 16 26.500Z" fill="#fbcf3a" />
    </svg>
    <svg width="70" height="34" viewBox="-22 -1 70 34">
      <path d="M10 18H26A8.500 9.500 0 1 0 24 24" fill="none" stroke="#3fa3e6" strokeWidth="4.500" />
      <path d="M12 13Q16 7 23 11" fill="none" stroke="#a9dcf8" strokeWidth="1.500" />
      <path d="M5 29Q1 25 9 14T28 2Q31 4 27 9Q28 4.500 23 7T9 19 5 29Z" fill="#eed548" />
    </svg>
    <TaskButton>
      <svg width="32" height="30" viewBox="0 0 32 30">
        <path d="M2 4H9L11 2H19L21 4H29V27H2Z" fill="#ecc65a" />
        <path d="M2 8H30V27H2Z" fill="#f8e08a" />
        <path d="M5 4H10M14 4H19M22 5H26" stroke="#b87f4a" strokeWidth="1.500" />
        <path d="M6 29V19Q6 16 9 16H23Q26 16 26 19V29H21V23H11V29Z" fill="#8fd0ef" stroke="#d9f1fb" />
      </svg>
    </TaskButton>
    <TaskButton><ProjectLogo size={28} /></TaskButton>
    <Tray>
      <svg width="13" height="5" viewBox="-1 0 13 5"><path d="M0 4.500 3.500 1 7 4.500Z" fill="#fff" /></svg>
      <svg width="13" height="14" viewBox="0 0 13 14">
        <path d="M1 5H3.500L7 1.500V12.500L3.500 9H1Z" fill="#fff" />
        <path d="M9 4.500Q10.500 7 9 9.500M11 3Q13 7 11 11" fill="none" stroke="#b9c8dc" />
      </svg>
      <svg width="15" height="14" viewBox="0 0 15 14">
        <rect x="4.500" y="3.500" width="9" height="6.500" fill="#2d4568" stroke="#fff" strokeWidth="1.300" />
        <path d="M6 12.500H12M9 10V12.500M2 4V10H4" fill="none" stroke="#fff" strokeWidth="1.300" />
        <rect x="0.500" y="1" width="4" height="4" fill="#b9d7a0" />
      </svg>
      <Clock>15:05<br />29/07/2010</Clock>
      <ShowDesktop />
    </Tray>
  </TaskBar>
);

const TutorialBadge = () => (
  <Watermark width="116" height="112" viewBox="990 588 116 112">
    <defs>
      <linearGradient id="badge" x1="0" y1="0" x2="0" y2="1">
        <stop offset="0" stopColor="#86ace2" />
        <stop offset="0.480" stopColor="#4472ba" />
        <stop offset="0.540" stopColor="#0e2d5a" />
        <stop offset="1" stopColor="#1e4c8c" />
      </linearGradient>
      <linearGradient id="paper" x1="0" y1="0" x2="0" y2="1">
        <stop offset="0" stopColor="#fff" />
        <stop offset="1" stopColor="#dfe1e4" />
      </linearGradient>
      <filter id="shadow" x="-20%" y="-20%" width="150%" height="150%">
        <feDropShadow dx="2" dy="2" stdDeviation="1.500" floodColor="#000" floodOpacity="0.750" />
      </filter>
    </defs>
    <path d="M1020 594.500H1084Q1089 594.500 1089 599V686H997V618Q999 597 1020 594.500Z" fill="url(#badge)" stroke="#16355f" strokeWidth="2.500" filter="url(#shadow)" />
    <path d="M1031 607 1097 612Q1101 612.500 1100.500 616L1092 688Q1091 692 1087 691.500L1021 682Q1017 681 1017.500 677L1026 611Q1027 607 1031 607Z" fill="url(#paper)" filter="url(#shadow)" />
    <text transform="translate(1027 651.500) rotate(8) skewX(-6)" fontFamily="Open Sans" fontWeight="800" fontSize="16.500" textLength="61" lengthAdjust="spacingAndGlyphs" fill="#4170b4">
      Tutorial
    </text>
  </Watermark>
);

const App = (): React.JSX.Element => (
  <React.Fragment>
    <GlobalStyle />
    <Screen>
      <Desktop>
        <TitleArea />
        <RibbonBar />
        <Gap />
        <Workspace>
          <ViewBar><ViewName>Diagramme de Gantt</ViewName></ViewBar>
          <TaskSheet />
          <Splitter />
          <GanttPane />
          <VerticalBar>
            <Arrow $dir="up" />
            <Thumb $vertical $gap={6}><i /><i /><i /></Thumb>
            <Arrow $dir="down" />
            <Grip />
            <svg width="14" height="17" viewBox="0 0 14 17">
              <path d="M11 4V15M7 8V15M3 12V15" stroke="#9da3aa" strokeWidth="2" strokeDasharray="2 2" />
            </svg>
          </VerticalBar>
        </Workspace>
        <Status />
        <Taskbar />
      </Desktop>
      <FillHandle />
      <Pointer width="22" height="32" viewBox="0 0 22 32">
        <path d="M2 2V24.500L7 20 11 28.500 14.500 27 11 18.500H18.500Z" fill="#fff" stroke="#555" strokeWidth="1.300" />
      </Pointer>
      <TutorialBadge />
    </Screen>
  </React.Fragment>
);

export default App;
